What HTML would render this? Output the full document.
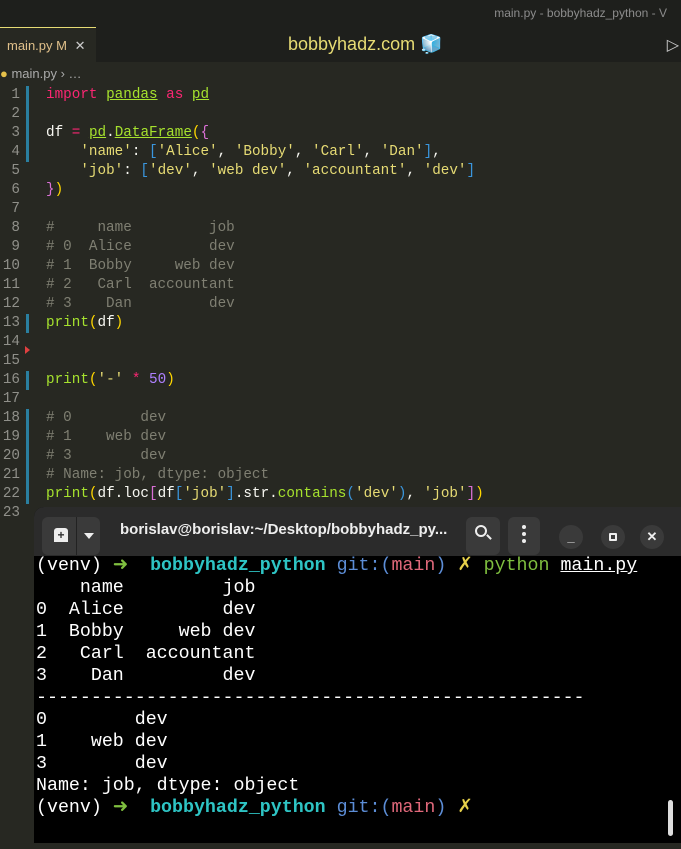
<!DOCTYPE html>
<html><head><meta charset="utf-8"><style>
*{margin:0;padding:0;box-sizing:border-box}
body{width:681px;height:849px;background:#272822;position:relative;overflow:hidden;font-family:"Liberation Sans",sans-serif}
.top{position:absolute;left:0;top:0;width:681px;height:37px;background:#1e1f1c}
.tabs{position:absolute;left:0;top:27px;width:681px;height:35px;background:#1e1f1c}
.tab{position:absolute;left:0;top:27px;width:96px;height:35px;background:#272822;border-top:1px solid #e6db74;color:#e0c08a;font-size:13px;line-height:36px;padding-left:7px}
.code{position:absolute;left:0;top:86px;font-family:"Liberation Mono",monospace;font-size:14.3px;line-height:19px;white-space:pre;color:#f8f8f2}
.ln{position:absolute;left:0;width:20px;text-align:right;color:#90908a}
.tx{position:absolute;left:46px}
.k{color:#f92672}.g{color:#a6e22e}.s{color:#e6db74}.c{color:#7f7f72}.n{color:#ae81ff}.b{color:#3a96dd}.p{color:#da70d6}.y{color:#ffd700}
.u{text-decoration:underline}
.term{position:absolute;left:34px;top:507px;width:660px;height:336px;background:#000;border-radius:10px 10px 0 0;overflow:hidden}
.th{position:absolute;left:0;top:0;width:100%;height:49px;background:#2b2b2b}
.btn{position:absolute;background:#3a3a3a;border-radius:6px}
.circ{position:absolute;width:24px;height:24px;border-radius:50%;background:#3a3a3a;color:#eee;text-align:center;font-size:13px;line-height:24px;font-weight:bold}
.tt{font-family:"Liberation Mono",monospace;font-size:18.3px;line-height:22px;white-space:pre;color:#fff;position:absolute;left:2px;top:48px}
.cy{color:#2ec4c4;font-weight:bold}.gb{color:#5c8dd6}.rd{color:#e0687a}.yl{color:#e6d04a}.gr{color:#7fbf3f}
</style></head><body>
<div class="top"><div style="position:absolute;right:14px;top:6px;color:#8c8c8c;font-size:12px">main.py - bobbyhadz_python - V</div></div>
<div class="tabs"><div style="position:absolute;left:288px;top:0;color:#e6db74;font-size:18px;line-height:34px">bobbyhadz.com <span style="color:#9cd3f0">🧊</span></div><div style="position:absolute;right:2px;top:8px;color:#ccc;font-size:16px">▷</div></div>
<div class="tab">main.py <span style="color:#e0c08a">M</span> <span style="color:#ccc;margin-left:4px">✕</span></div>
<div style="position:absolute;left:0;top:66px;color:#aaa;font-size:13px"><span style="color:#e6c14a">●</span> main.py › …</div>
<div style="position:absolute;left:26px;top:86px;width:3px;height:76px;background:#2a7fa0"></div>
<div style="position:absolute;left:26px;top:314px;width:3px;height:19px;background:#2a7fa0"></div>
<div style="position:absolute;left:26px;top:371px;width:3px;height:19px;background:#2a7fa0"></div>
<div style="position:absolute;left:26px;top:409px;width:3px;height:95px;background:#2a7fa0"></div>
<div style="position:absolute;left:25px;top:346px;width:0;height:0;border-left:5px solid #e04040;border-top:4px solid transparent;border-bottom:4px solid transparent"></div>
<div class="code">
<div class="ln" style="top:0">1</div><div class="ln" style="top:19px">2</div><div class="ln" style="top:38px">3</div><div class="ln" style="top:57px">4</div><div class="ln" style="top:76px">5</div><div class="ln" style="top:95px">6</div><div class="ln" style="top:114px">7</div><div class="ln" style="top:133px">8</div><div class="ln" style="top:152px">9</div><div class="ln" style="top:171px">10</div><div class="ln" style="top:190px">11</div><div class="ln" style="top:209px">12</div><div class="ln" style="top:228px">13</div><div class="ln" style="top:247px">14</div><div class="ln" style="top:266px">15</div><div class="ln" style="top:285px">16</div><div class="ln" style="top:304px">17</div><div class="ln" style="top:323px">18</div><div class="ln" style="top:342px">19</div><div class="ln" style="top:361px">20</div><div class="ln" style="top:380px">21</div><div class="ln" style="top:399px">22</div><div class="ln" style="top:418px">23</div>
<div class="tx" style="top:0"><span class="k">import</span> <span class="g u">pandas</span> <span class="k">as</span> <span class="g u">pd</span>

df <span class="k">=</span> <span class="g u">pd</span>.<span class="g u">DataFrame</span><span class="y">(</span><span class="p">{</span>
    <span class="s">'name'</span>: <span class="b">[</span><span class="s">'Alice'</span>, <span class="s">'Bobby'</span>, <span class="s">'Carl'</span>, <span class="s">'Dan'</span><span class="b">]</span>,
    <span class="s">'job'</span>: <span class="b">[</span><span class="s">'dev'</span>, <span class="s">'web dev'</span>, <span class="s">'accountant'</span>, <span class="s">'dev'</span><span class="b">]</span>
<span class="p">}</span><span class="y">)</span>

<span class="c">#     name         job
# 0  Alice         dev
# 1  Bobby     web dev
# 2   Carl  accountant
# 3    Dan         dev</span>
<span class="g">print</span><span class="y">(</span>df<span class="y">)</span>


<span class="g">print</span><span class="y">(</span><span class="s">'-'</span> <span class="k">*</span> <span class="n">50</span><span class="y">)</span>

<span class="c"># 0        dev
# 1    web dev
# 3        dev
# Name: job, dtype: object</span>
<span class="g">print</span><span class="y">(</span>df.loc<span class="p">[</span>df<span class="b">[</span><span class="s">'job'</span><span class="b">]</span>.str.<span class="g">contains</span><span class="b">(</span><span class="s">'dev'</span><span class="b">)</span>, <span class="s">'job'</span><span class="p">]</span><span class="y">)</span></div>
</div>
<div class="term">
<div class="th">
<div class="btn" style="left:8px;top:10px;width:58px;height:38px"></div>
<div style="position:absolute;left:20px;top:21px;width:14px;height:14px;background:#eee;border-radius:3px 3px 0 0;color:#333;font-size:12px;line-height:14px;text-align:center;font-weight:bold">+</div>
<div style="position:absolute;left:42px;top:10px;width:1px;height:38px;background:#222"></div>
<div style="position:absolute;left:50px;top:26px;border-top:6px solid #eee;border-left:5px solid transparent;border-right:5px solid transparent"></div>
<div style="position:absolute;left:86px;top:14px;color:#eee;font-size:15px;font-weight:bold">borislav@borislav:~/Desktop/bobbyhadz_py...</div>
<div class="btn" style="left:432px;top:10px;width:34px;height:38px"></div>
<div style="position:absolute;left:441px;top:18px;width:12px;height:12px;border:2px solid #eee;border-radius:50%"></div>
<div style="position:absolute;left:452px;top:29px;width:6px;height:2px;background:#eee;transform:rotate(45deg)"></div>
<div class="btn" style="left:474px;top:10px;width:32px;height:38px"></div>
<div style="position:absolute;left:488px;top:18px;width:4px;height:4px;background:#eee;border-radius:50%;box-shadow:0 7px #eee,0 14px #eee"></div>
<div class="circ" style="left:525px;top:18px">_</div>
<div class="circ" style="left:567px;top:18px"><div style="position:absolute;left:8px;top:8px;width:8px;height:8px;border:2px solid #eee;border-radius:1px"></div></div>
<div class="circ" style="left:606px;top:18px">✕</div>
</div>
<div class="tt">(venv) <span class="gr">➜</span>  <span class="cy">bobbyhadz_python</span> <span class="gb">git:(</span><span class="rd">main</span><span class="gb">)</span> <span class="yl">✗</span> <span class="gr">python</span> <span class="u">main.py</span>
    name         job
0  Alice         dev
1  Bobby     web dev
2   Carl  accountant
3    Dan         dev
--------------------------------------------------
0        dev
1    web dev
3        dev
Name: job, dtype: object
(venv) <span class="gr">➜</span>  <span class="cy">bobbyhadz_python</span> <span class="gb">git:(</span><span class="rd">main</span><span class="gb">)</span> <span class="yl">✗</span></div>
<div style="position:absolute;left:634px;top:293px;width:5px;height:36px;background:#ddd;border-radius:3px"></div>
</div>
</body></html>
